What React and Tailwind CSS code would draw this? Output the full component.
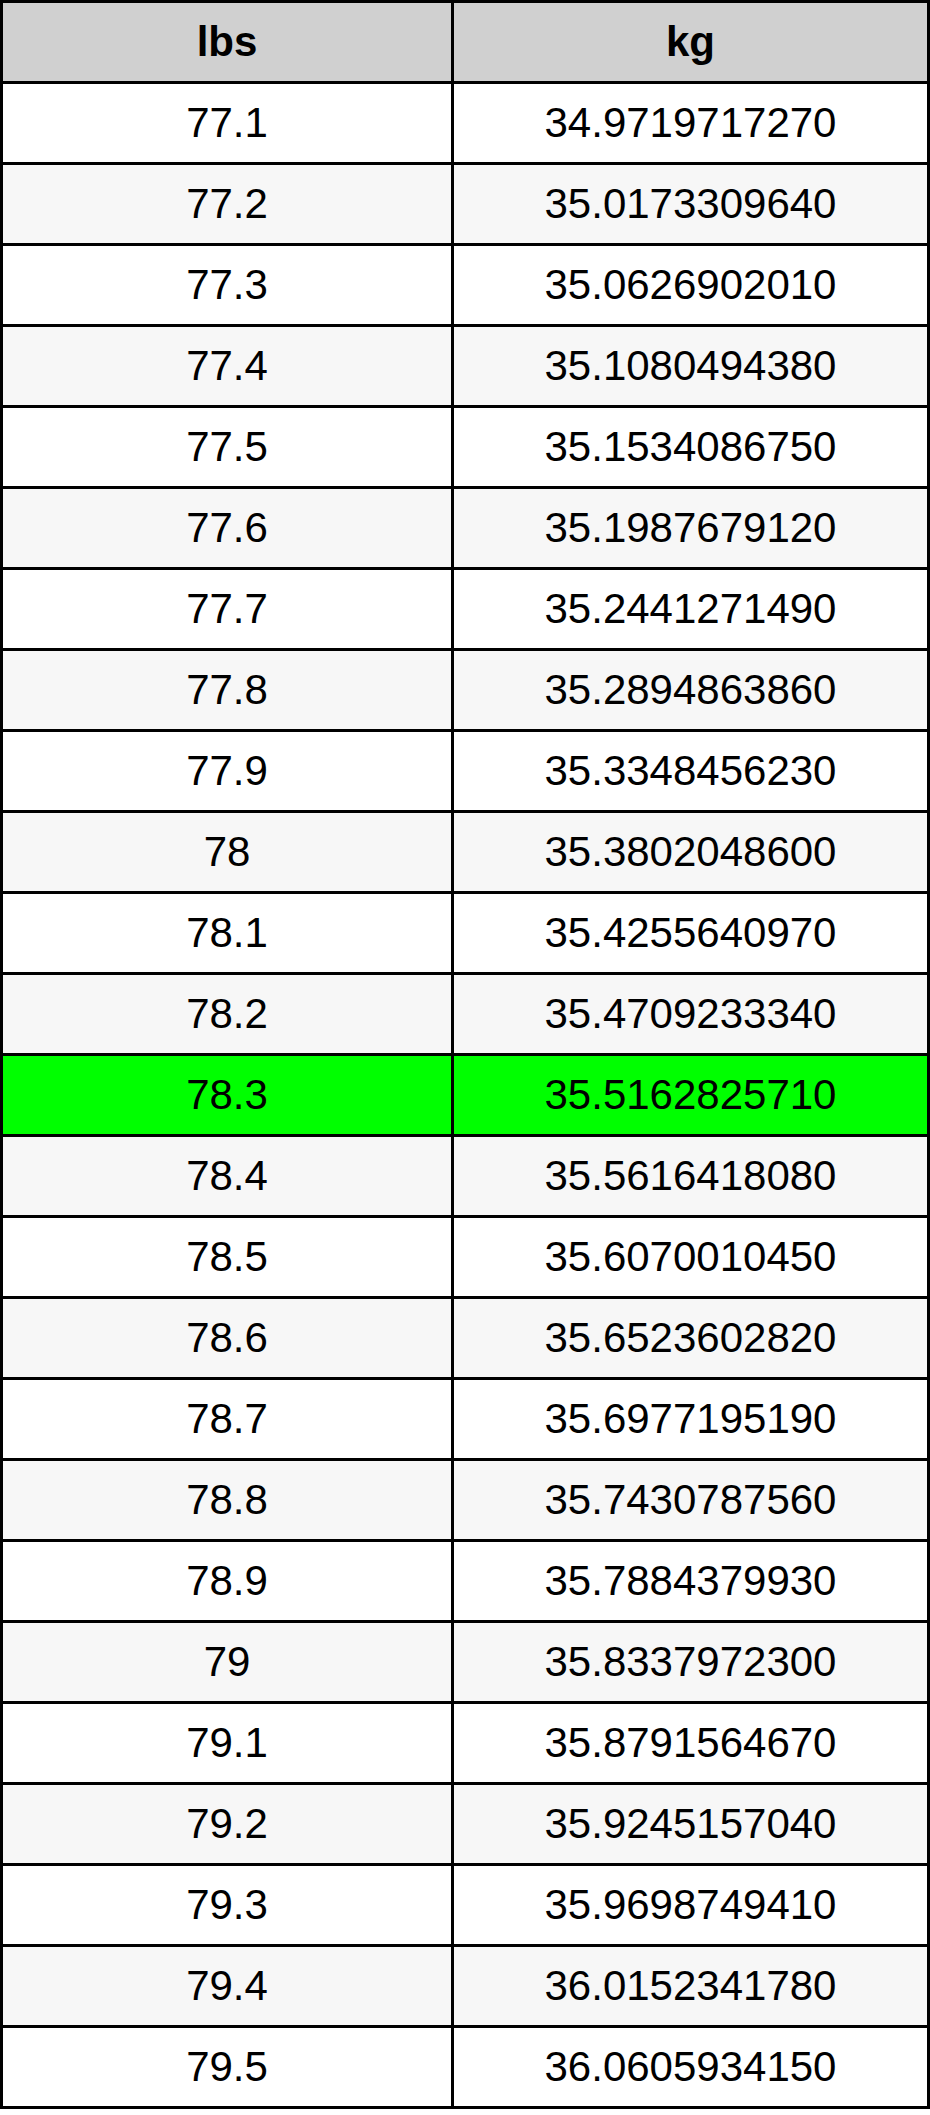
import React from "react";

const rows = [
  ["77.1", "34.9719717270"],
  ["77.2", "35.0173309640"],
  ["77.3", "35.0626902010"],
  ["77.4", "35.1080494380"],
  ["77.5", "35.1534086750"],
  ["77.6", "35.1987679120"],
  ["77.7", "35.2441271490"],
  ["77.8", "35.2894863860"],
  ["77.9", "35.3348456230"],
  ["78", "35.3802048600"],
  ["78.1", "35.4255640970"],
  ["78.2", "35.4709233340"],
  ["78.3", "35.5162825710"],
  ["78.4", "35.5616418080"],
  ["78.5", "35.6070010450"],
  ["78.6", "35.6523602820"],
  ["78.7", "35.6977195190"],
  ["78.8", "35.7430787560"],
  ["78.9", "35.7884379930"],
  ["79", "35.8337972300"],
  ["79.1", "35.8791564670"],
  ["79.2", "35.9245157040"],
  ["79.3", "35.9698749410"],
  ["79.4", "36.0152341780"],
  ["79.5", "36.0605934150"],
];

function Cell({ children, bg, bold }) {
  return (
    <div
      className={`${bg} h-[78px] flex items-center justify-center text-[42px] leading-none text-black ${
        bold ? "font-bold" : ""
      }`}
    >
      {children}
    </div>
  );
}

export default function App() {
  return (
    <div
      className="w-[930px] bg-white"
      style={{ fontFamily: '"Liberation Sans", Arial, sans-serif' }}
    >
      <div className="grid grid-cols-[448px_473px] gap-[3px] bg-black p-[3px]">
        <Cell bg="bg-[#d0d0d0]" bold>lbs</Cell>
        <Cell bg="bg-[#d0d0d0]" bold>kg</Cell>
        {rows.map(([a, b], i) => {
          const bg =
            a === "78.3"
              ? "bg-[#00ff00]"
              : i % 2 === 1
              ? "bg-[#f7f7f7]"
              : "bg-white";
          return (
            <React.Fragment key={a}>
              <Cell bg={bg}>{a}</Cell>
              <Cell bg={bg}>{b}</Cell>
            </React.Fragment>
          );
        })}
      </div>
    </div>
  );
}
